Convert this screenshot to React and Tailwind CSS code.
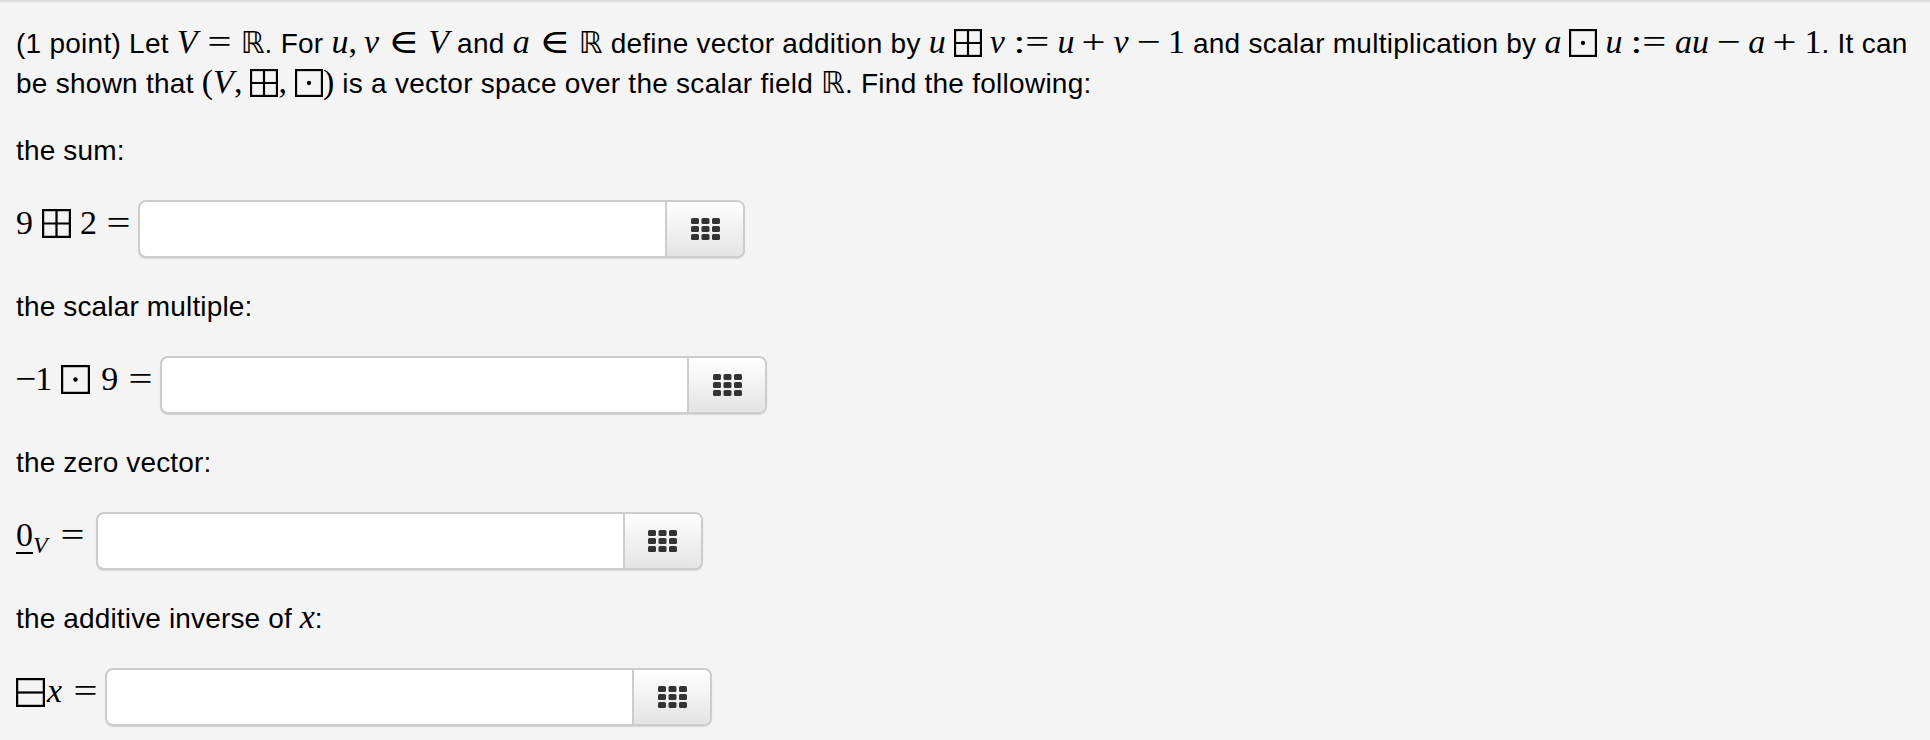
import React from 'react';

const serif = "font-['Liberation_Serif','DejaVu_Serif',serif]";

const BoxPlus = ({ size = 28 }) => (
  <svg width={size} height={size} viewBox="0 0 26 26" className="inline-block align-[-4px]">
    <rect x="1" y="1" width="24" height="24" fill="none" stroke="#000" strokeWidth="2" />
    <path d="M13 1V25M1 13H25" stroke="#000" strokeWidth="2" />
  </svg>
);

const BoxDot = ({ size = 28 }) => (
  <svg width={size} height={size} viewBox="0 0 26 26" className="inline-block align-[-4px]">
    <rect x="1" y="1" width="24" height="24" fill="none" stroke="#000" strokeWidth="2" />
    <circle cx="13" cy="13" r="2" fill="#000" />
  </svg>
);

const BoxMinus = ({ size = 29 }) => (
  <svg width={size} height={size} viewBox="0 0 26 26" className="inline-block align-[-5px]">
    <rect x="1" y="1" width="24" height="24" fill="none" stroke="#000" strokeWidth="2" />
    <path d="M1 13H25" stroke="#000" strokeWidth="2" />
  </svg>
);

// math pieces
const M = ({ children }) => <span className={`${serif} text-[34px] leading-none tracking-normal`}>{children}</span>;
const I = ({ children }) => <i className="italic">{children}</i>;
const Rel = ({ children }) => <span className="mx-[12px] inline-block scale-x-125">{children}</span>;
const Bin = ({ children }) => <span className="mx-[10px] inline-block scale-x-125">{children}</span>;
const Eq = ({ className = 'ml-[12px]' }) => <span className={`${className} inline-block scale-x-125`}>=</span>;
const R = () => <span className="font-['DejaVu_Sans',sans-serif] text-[30px]">ℝ</span>;

const KeyboardIcon = () => (
  <svg width="29" height="22" viewBox="0 0 29 22">
    {[0, 10.5, 21].map((x) =>
      [0, 8, 16].map((y) => (
        <rect key={`${x}-${y}`} x={x} y={y} width="8" height="6" rx="1.6" fill="#333" />
      ))
    )}
  </svg>
);

const AnswerBox = () => (
  <div className="ml-[10px] flex h-[58px] w-[607px] overflow-hidden rounded-[8px] border-2 border-[#cccccc] bg-white shadow-[0_1px_1px_rgba(0,0,0,0.12)]">
    <div className="flex-1" />
    <div className="flex w-[78px] items-center justify-center border-l-2 border-[#cccccc] bg-linear-to-b from-white to-[#e4e4e4]">
      <KeyboardIcon />
    </div>
  </div>
);

const parts = [
  {
    label: 'the sum:',
    math: (
      <M>
        9<span className="mx-[9px]"><BoxPlus size={29} /></span>2<Eq />
      </M>
    ),
  },
  {
    label: 'the scalar multiple:',
    math: (
      <M>
        <span className="inline-block scale-x-110">−</span>1
        <span className="ml-[9px] mr-[11px]"><BoxDot size={29} /></span>9<Eq className="ml-[13px]" />
      </M>
    ),
  },
  {
    label: 'the zero vector:',
    math: (
      <M>
        <span className="underline decoration-2 underline-offset-[6px]">0</span>
        <i className="text-[24px] align-[-7px]">V</i>
        <Eq className="ml-[15px] mr-[4px]" />
      </M>
    ),
  },
  {
    label: (
      <>
        the additive inverse of <M><I>x</I></M>:
      </>
    ),
    math: (
      <M>
        <BoxMinus />
        <span className="ml-[2px]"><I>x</I></span>
        <Eq className="ml-[14px]" />
      </M>
    ),
  },
];

const App = () => {
  return (
    <div className="min-h-[740px] bg-[#f4f4f4] font-['Liberation_Sans',Arial,sans-serif] text-[28px] leading-[40px] tracking-[0.15px] text-black">
      <div className="h-[3px] bg-linear-to-b from-[#d9d9d9] to-[#ededed]" />
      <div className="px-4 pt-[21px]">
        {/* Problem statement */}
        <div className="whitespace-nowrap tracking-[0.26px]">
          (1 point) Let{' '}
          <M>
            <I>V</I>
            <Rel>=</Rel>
            <R />
          </M>
          . For{' '}
          <M>
            <I>u</I>,<span className="ml-[7px]" /><I>v</I>
            <Rel>∈</Rel>
            <I>V</I>
          </M>{' '}
          and{' '}
          <M>
            <I>a</I>
            <Rel>∈</Rel>
            <R />
          </M>{' '}
          define vector addition by{' '}
          <M>
            <I>u</I>
            <span className="mx-[8px]"><BoxPlus /></span>
            <I>v</I>
            <Rel>:=</Rel>
            <I>u</I>
            <Bin>+</Bin>
            <I>v</I>
            <Bin>−</Bin>1
          </M>{' '}
          and scalar multiplication by{' '}
          <M>
            <I>a</I>
            <span className="mx-[8px]"><BoxDot /></span>
            <I>u</I>
            <Rel>:=</Rel>
            <I>au</I>
            <Bin>−</Bin>
            <I>a</I>
            <Bin>+</Bin>1
          </M>
          . It can
        </div>
        <div className="whitespace-nowrap tracking-[0.26px]">
          be shown that{' '}
          <M>
            (<I>V</I>,<span className="ml-[8px]" /><BoxPlus />,<span className="ml-[8px]" /><BoxDot />)
          </M>{' '}
          is a vector space over the scalar field <M><R /></M>. Find the following:
        </div>

        {/* Answer parts */}
        <div className="mt-[27px]">
          {parts.map((p, i) => (
            <div key={i} className="mb-[29px]">
              <div>{p.label}</div>
              <div className="mt-[29px] flex h-[58px] items-center">
                <div className="mb-[8px] whitespace-nowrap">{p.math}</div>
                <AnswerBox />
              </div>
            </div>
          ))}
        </div>
      </div>
    </div>
  );
};

export default App;
